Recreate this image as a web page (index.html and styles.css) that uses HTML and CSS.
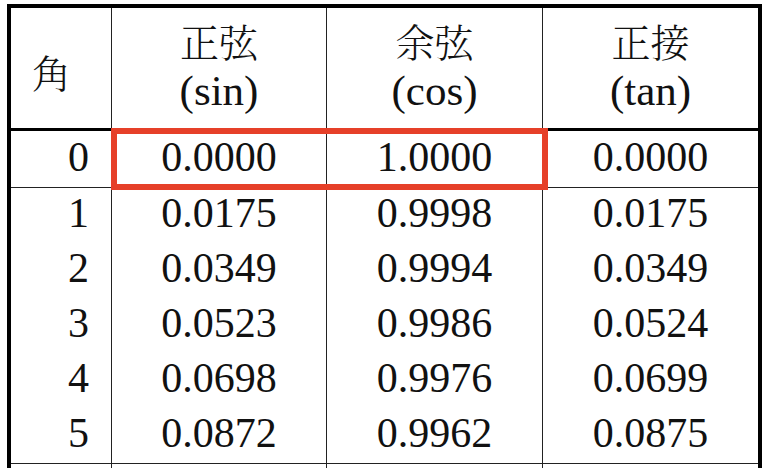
FILE: index.html
```html
<!DOCTYPE html>
<html>
  <head>
    <title>三角関数表</title>
    <link rel="stylesheet" href="styles.css">
  </head>
  <body>
    <div class="sheet">
      <table class="trig">
        <colgroup>
          <col class="col-angle">
          <col class="col-sin">
          <col class="col-cos">
          <col class="col-tan">
        </colgroup>
        <thead>
          <tr>
            <th class="angle-head"><div class="kanji">角</div></th>
            <th><div class="kanji">正弦</div><div class="latin">(sin)</div></th>
            <th><div class="kanji">余弦</div><div class="latin">(cos)</div></th>
            <th><div class="kanji">正接</div><div class="latin">(tan)</div></th>
          </tr>
        </thead>
        <tbody>
          <tr class="first-row">
            <td class="angle">0</td><td>0.0000</td><td>1.0000</td><td>0.0000</td>
          </tr>
          <tr>
            <td class="angle">1</td><td>0.0175</td><td>0.9998</td><td>0.0175</td>
          </tr>
          <tr>
            <td class="angle">2</td><td>0.0349</td><td>0.9994</td><td>0.0349</td>
          </tr>
          <tr>
            <td class="angle">3</td><td>0.0523</td><td>0.9986</td><td>0.0524</td>
          </tr>
          <tr>
            <td class="angle">4</td><td>0.0698</td><td>0.9976</td><td>0.0699</td>
          </tr>
          <tr class="group-end">
            <td class="angle">5</td><td>0.0872</td><td>0.9962</td><td>0.0875</td>
          </tr>
          <tr class="next-row">
            <td class="angle"></td><td></td><td></td><td></td>
          </tr>
        </tbody>
      </table>
      <!-- highlight around sin/cos of 0 -->
      <div class="mark"></div>
    </div>
  </body>
</html>
```

FILE: styles.css
```css
html,
body {
  margin: 0;
  background-color: white;
  overflow: hidden;
}

body {
  padding: 4px 0 0 7px;
}

.sheet {
  position: relative;
  width: 755px;
}

.trig {
  width: 755px;
  table-layout: fixed;
  border-collapse: separate;
  border-spacing: 0;
  border: 4px solid black;
  border-bottom: none;
  font-family: "Liberation Serif", "Noto Sans CJK JP", serif;
  font-size: 42px;
  color: #111;
}

.col-angle {
  width: 100px;
}

.col-sin {
  width: 215px;
}

.col-cos,
.col-tan {
  width: 216px;
}

.trig th,
.trig td {
  box-sizing: border-box;
  padding: 0;
  border-left: 1px solid #222;
  text-align: center;
  font-weight: normal;
}

.trig th:first-child,
.trig td:first-child {
  border-left: none;
}

.trig th {
  vertical-align: top;
  padding: 7px 0 11px;
  border-bottom: 3px solid black;
}

.kanji {
  font-family: "Noto Serif CJK JP", "Noto Sans CJK JP", sans-serif;
  font-weight: 300;
  font-size: 39px;
  line-height: 50px;
}

.latin {
  line-height: 52px;
  font-size: 43px;
}

.trig th.angle-head {
  text-align: left;
  padding: 38px 0 0 21px;
}

.trig td {
  line-height: 51px;
  padding-bottom: 4px;
}

.trig td.angle {
  text-align: right;
  padding-right: 22px;
}

.first-row td {
  line-height: 52px;
  border-bottom: 1px solid #222;
}

.group-end td {
  border-bottom: 1px solid #222;
}

.mark {
  position: absolute;
  left: 104px;
  top: 124px;
  width: 437px;
  height: 62px;
  box-sizing: border-box;
  border: 6px solid #e64029;
}
```
